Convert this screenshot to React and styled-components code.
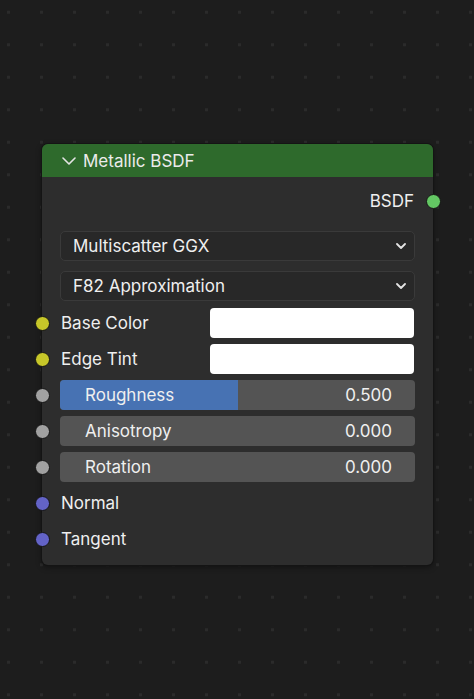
import React from "react";
import styled, { createGlobalStyle } from "styled-components";

const GlobalStyle = createGlobalStyle`
  html, body {
    margin: 0;
    padding: 0;
    width: 100%;
    height: 100%;
  }
  body {
    background-color: #1d1d1d;
    background-image: radial-gradient(circle, #2b2b2b 0, #2b2b2b 1.4px, transparent 2px);
    background-size: 33px 32.5px;
    background-position: -8px -4px;
    font-family: Inter, "Noto Sans", "DejaVu Sans", sans-serif;
    -webkit-font-smoothing: antialiased;
  }
`;

const Canvas = styled.div`
  padding: 144px 0 0 42px;
  height: 699px;
  box-sizing: border-box;
`;

const Node = styled.div`
  width: 391px;
  height: 421px;
  box-sizing: border-box;
  background: #2d2d2d;
  border-radius: 6px;
  box-shadow: 0 0 0 1px #141414, 0 2px 6px rgba(0, 0, 0, 0.45);
  display: flex;
  flex-direction: column;
`;

const Header = styled.div`
  height: 33px;
  background: #2e6a2c;
  border-radius: 6px 6px 0 0;
  display: flex;
  align-items: center;
  gap: 7px;
  padding-left: 20px;
  color: #ebebeb;
  font-size: 17px;
  flex-shrink: 0;
`;

const Body = styled.div`
  padding: 6px 18px 0 18px;
  display: flex;
  flex-direction: column;
`;

const Row = styled.div`
  position: relative;
  height: 36px;
  display: flex;
  align-items: center;
  justify-content: ${(p) => (p.$output ? "flex-end" : "flex-start")};
  color: #efefef;
  font-size: 17px;
`;

const Socket = styled.span`
  position: absolute;
  top: 50%;
  ${(p) => (p.$right ? "right: -25.5px;" : "left: -25.5px;")}
  width: 13px;
  height: 13px;
  margin-top: -7px;
  border-radius: 50%;
  background: ${(p) => p.$color};
  border: 1px solid #151515;
`;

const Label = styled.span`
  padding-left: ${(p) => (p.$output ? "0" : "1px")};
  padding-right: ${(p) => (p.$output ? "1px" : "0")};
  flex: 1;
  text-align: ${(p) => (p.$output ? "right" : "left")};
`;

const Dropdowns = styled.div`
  display: flex;
  flex-direction: column;
  gap: 10px;
  margin: 12px 0 4px;
`;

const Dropdown = styled.div`
  height: 30px;
  box-sizing: border-box;
  background: #282828;
  border: 1px solid #3a3a3a;
  border-radius: 5px;
  display: flex;
  align-items: center;
  justify-content: space-between;
  padding: 0 5px 0 12px;
  color: #efefef;
  font-size: 17px;
`;

const Swatch = styled.div`
  width: 204px;
  height: 30px;
  margin-right: 1px;
  background: #ffffff;
  border-radius: 4px;
`;

const Slider = styled.div`
  position: relative;
  flex: 1;
  height: 30px;
  background: #545454;
  border-radius: 4px;
  overflow: hidden;
  display: flex;
  align-items: center;
  justify-content: space-between;
  padding: 0 23px 0 25px;
  box-sizing: border-box;
  color: #efefef;
  font-size: 17px;
`;

const Fill = styled.div`
  position: absolute;
  left: 0;
  top: 0;
  bottom: 0;
  background: #4772b3;
`;

const SliderText = styled.span`
  position: relative;
`;

const Chevron = ({ w = 14, h = 8, sw = 1.6, color = "#e4e4e4" }) => (
  <svg width={w} height={h} viewBox={`0 0 ${w} ${h}`} fill="none">
    <polyline
      points={`1,1 ${w / 2},${h - 1} ${w - 1},1`}
      stroke={color}
      strokeWidth={sw}
      strokeLinecap="round"
      strokeLinejoin="round"
    />
  </svg>
);

const ChevronBox = styled.span`
  display: flex;
  width: 16px;
  justify-content: center;
`;

const sliders = [
  { label: "Roughness", value: "0.500", fill: 0.5 },
  { label: "Anisotropy", value: "0.000", fill: 0 },
  { label: "Rotation", value: "0.000", fill: 0 },
];

export default function App() {
  return (
    <>
      <GlobalStyle />
      <Canvas>
        <Node>
          <Header>
            <Chevron w={14} h={8} sw={1.6} />
            <span>Metallic BSDF</span>
          </Header>
          <Body>
            <Row $output>
              <Label $output>BSDF</Label>
              <Socket $right $color="#63c763" />
            </Row>
            <Dropdowns>
              <Dropdown>
                <span>Multiscatter GGX</span>
                <ChevronBox>
                  <Chevron w={10} h={6} sw={1.8} />
                </ChevronBox>
              </Dropdown>
              <Dropdown>
                <span>F82 Approximation</span>
                <ChevronBox>
                  <Chevron w={10} h={6} sw={1.8} />
                </ChevronBox>
              </Dropdown>
            </Dropdowns>
            <Row>
              <Socket $color="#c7c729" />
              <Label>Base Color</Label>
              <Swatch />
            </Row>
            <Row>
              <Socket $color="#c7c729" />
              <Label>Edge Tint</Label>
              <Swatch />
            </Row>
            {sliders.map((s) => (
              <Row key={s.label}>
                <Socket $color="#a1a1a1" />
                <Slider>
                  {s.fill > 0 && <Fill style={{ width: `${s.fill * 100}%` }} />}
                  <SliderText>{s.label}</SliderText>
                  <SliderText>{s.value}</SliderText>
                </Slider>
              </Row>
            ))}
            <Row>
              <Socket $color="#6363c7" />
              <Label>Normal</Label>
            </Row>
            <Row>
              <Socket $color="#6363c7" />
              <Label>Tangent</Label>
            </Row>
          </Body>
        </Node>
      </Canvas>
    </>
  );
}
